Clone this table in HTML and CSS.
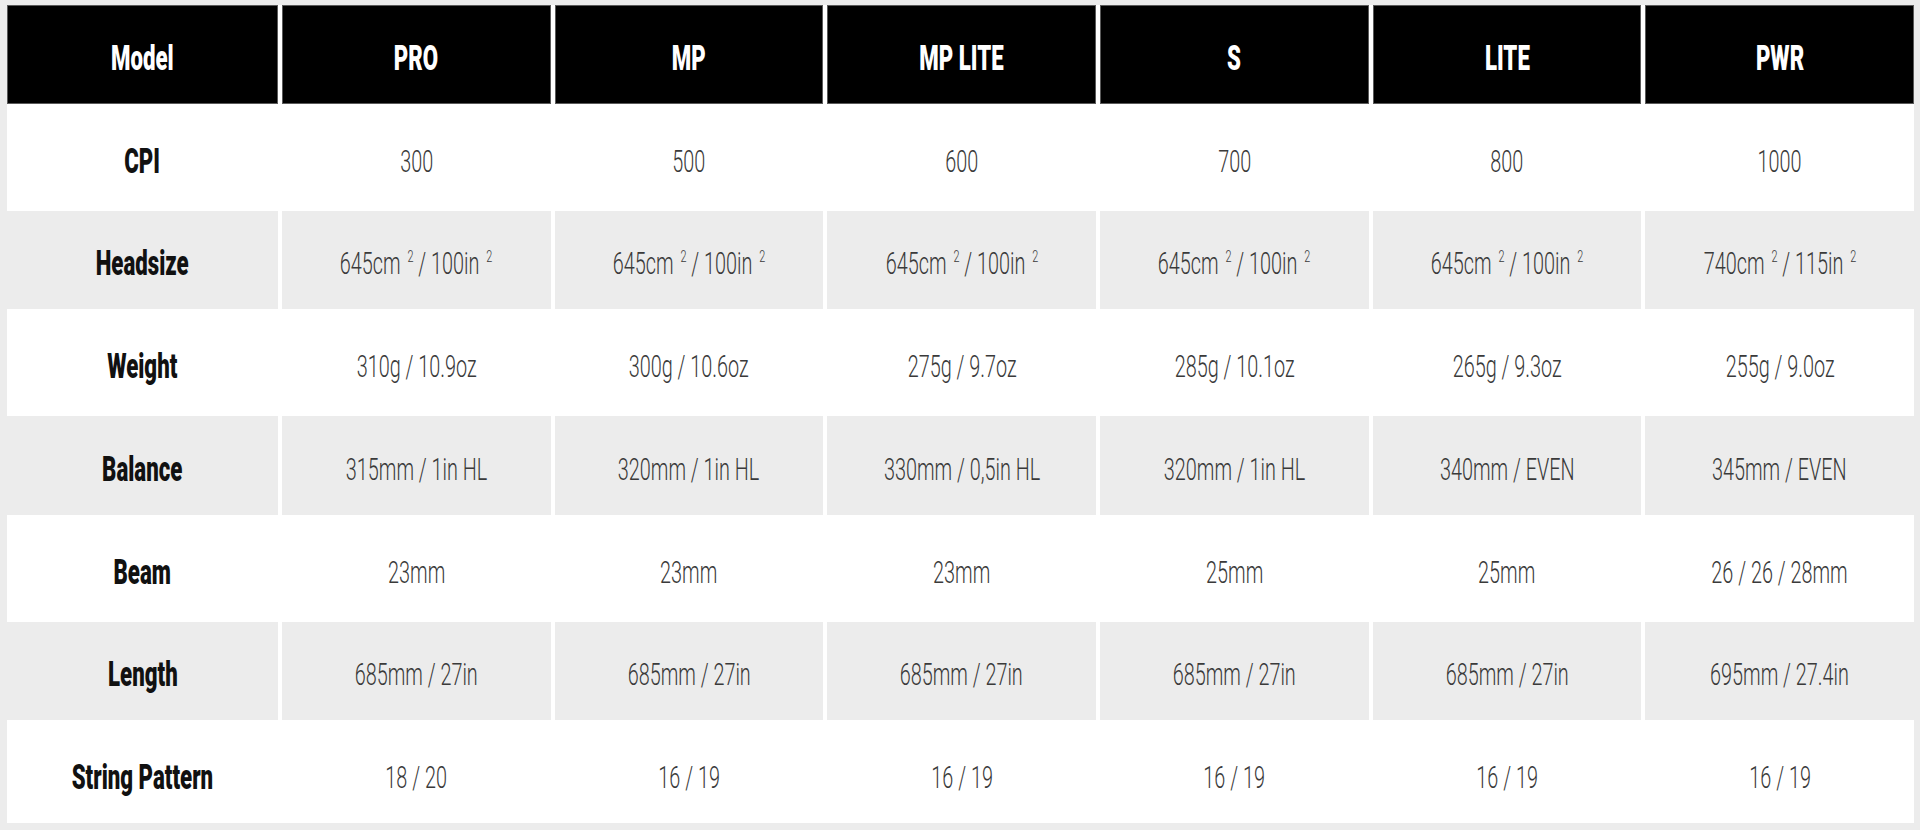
FILE: index.html
```html
<!DOCTYPE html>
<html lang="en">
<head>
<meta charset="utf-8">
<title>Specifications</title>
<link rel="stylesheet" href="styles.css">
</head>
<body>
<div class="spec" role="table">
  <div class="row head" role="row">
    <div class="cell label" role="columnheader"><span class="t">Model</span></div>
    <div class="cell label" role="columnheader"><span class="t">PRO</span></div>
    <div class="cell label" role="columnheader"><span class="t">MP</span></div>
    <div class="cell label" role="columnheader"><span class="t">MP LITE</span></div>
    <div class="cell label" role="columnheader"><span class="t">S</span></div>
    <div class="cell label" role="columnheader"><span class="t">LITE</span></div>
    <div class="cell label" role="columnheader"><span class="t">PWR</span></div>
  </div>
  <div class="row white" role="row">
    <div class="cell label" role="rowheader"><span class="t">CPI</span></div>
    <div class="cell val"><span class="t">300</span></div>
    <div class="cell val"><span class="t">500</span></div>
    <div class="cell val"><span class="t">600</span></div>
    <div class="cell val"><span class="t">700</span></div>
    <div class="cell val"><span class="t">800</span></div>
    <div class="cell val"><span class="t">1000</span></div>
  </div>
  <div class="row grey" role="row">
    <div class="cell label" role="rowheader"><span class="t">Headsize</span></div>
    <div class="cell val"><span class="t">645cm <sup>2</sup> / 100in <sup>2</sup></span></div>
    <div class="cell val"><span class="t">645cm <sup>2</sup> / 100in <sup>2</sup></span></div>
    <div class="cell val"><span class="t">645cm <sup>2</sup> / 100in <sup>2</sup></span></div>
    <div class="cell val"><span class="t">645cm <sup>2</sup> / 100in <sup>2</sup></span></div>
    <div class="cell val"><span class="t">645cm <sup>2</sup> / 100in <sup>2</sup></span></div>
    <div class="cell val"><span class="t">740cm <sup>2</sup> / 115in <sup>2</sup></span></div>
  </div>
  <div class="row white" role="row">
    <div class="cell label" role="rowheader"><span class="t">Weight</span></div>
    <div class="cell val"><span class="t">310g / 10.9oz</span></div>
    <div class="cell val"><span class="t">300g / 10.6oz</span></div>
    <div class="cell val"><span class="t">275g / 9.7oz</span></div>
    <div class="cell val"><span class="t">285g / 10.1oz</span></div>
    <div class="cell val"><span class="t">265g / 9.3oz</span></div>
    <div class="cell val"><span class="t">255g / 9.0oz</span></div>
  </div>
  <div class="row grey" role="row">
    <div class="cell label" role="rowheader"><span class="t">Balance</span></div>
    <div class="cell val"><span class="t">315mm / 1in HL</span></div>
    <div class="cell val"><span class="t">320mm / 1in HL</span></div>
    <div class="cell val"><span class="t">330mm / 0,5in HL</span></div>
    <div class="cell val"><span class="t">320mm / 1in HL</span></div>
    <div class="cell val"><span class="t">340mm / EVEN</span></div>
    <div class="cell val"><span class="t">345mm / EVEN</span></div>
  </div>
  <div class="row white" role="row">
    <div class="cell label" role="rowheader"><span class="t">Beam</span></div>
    <div class="cell val"><span class="t">23mm</span></div>
    <div class="cell val"><span class="t">23mm</span></div>
    <div class="cell val"><span class="t">23mm</span></div>
    <div class="cell val"><span class="t">25mm</span></div>
    <div class="cell val"><span class="t">25mm</span></div>
    <div class="cell val"><span class="t">26 / 26 / 28mm</span></div>
  </div>
  <div class="row grey" role="row">
    <div class="cell label" role="rowheader"><span class="t">Length</span></div>
    <div class="cell val"><span class="t">685mm / 27in</span></div>
    <div class="cell val"><span class="t">685mm / 27in</span></div>
    <div class="cell val"><span class="t">685mm / 27in</span></div>
    <div class="cell val"><span class="t">685mm / 27in</span></div>
    <div class="cell val"><span class="t">685mm / 27in</span></div>
    <div class="cell val"><span class="t">695mm / 27.4in</span></div>
  </div>
  <div class="row white" role="row">
    <div class="cell label" role="rowheader"><span class="t">String Pattern</span></div>
    <div class="cell val"><span class="t">18 / 20</span></div>
    <div class="cell val"><span class="t">16 / 19</span></div>
    <div class="cell val"><span class="t">16 / 19</span></div>
    <div class="cell val"><span class="t">16 / 19</span></div>
    <div class="cell val"><span class="t">16 / 19</span></div>
    <div class="cell val"><span class="t">16 / 19</span></div>
  </div>
</div>
</body>
</html>
```
FILE: styles.css
```css
html, body {
  margin: 0;
  padding: 0;
  background: #ececec;
}

body {
  font-family: Roboto, "Liberation Sans", sans-serif;
  overflow: hidden;
}

.spec {
  margin: 5px 6px 7px 7px;
  display: grid;
  grid-template-columns: 271px repeat(6, 1fr);
  grid-template-rows: repeat(8, 98.75px);
  gap: 4px;
  background: #ffffff;
}

.row {
  display: contents;
}

.cell {
  display: flex;
  align-items: center;
  justify-content: center;
  padding-top: 8px;
  box-sizing: border-box;
  white-space: nowrap;
}

.t {
  display: inline-block;
  transform-origin: 50% 50%;
}

.head .cell {
  background: #000000;
  color: #ffffff;
  box-shadow: inset 0 0 0 1px #5a5a5a;
}

.white .cell {
  background: #ffffff;
}

.grey .cell {
  background: #ececec;
}

.label {
  font-weight: 900;
  font-size: 35px;
  color: #111111;
}

.head .label {
  color: #ffffff;
}

.label .t {
  transform: scaleX(0.635);
}

.val {
  font-weight: 300;
  font-size: 31px;
  color: #3a3a3a;
}

.val .t {
  transform: scaleX(0.64);
}

.val sup {
  font-size: 17px;
  vertical-align: 0;
  position: relative;
  top: -12px;
  margin-left: 3px;
}
```
